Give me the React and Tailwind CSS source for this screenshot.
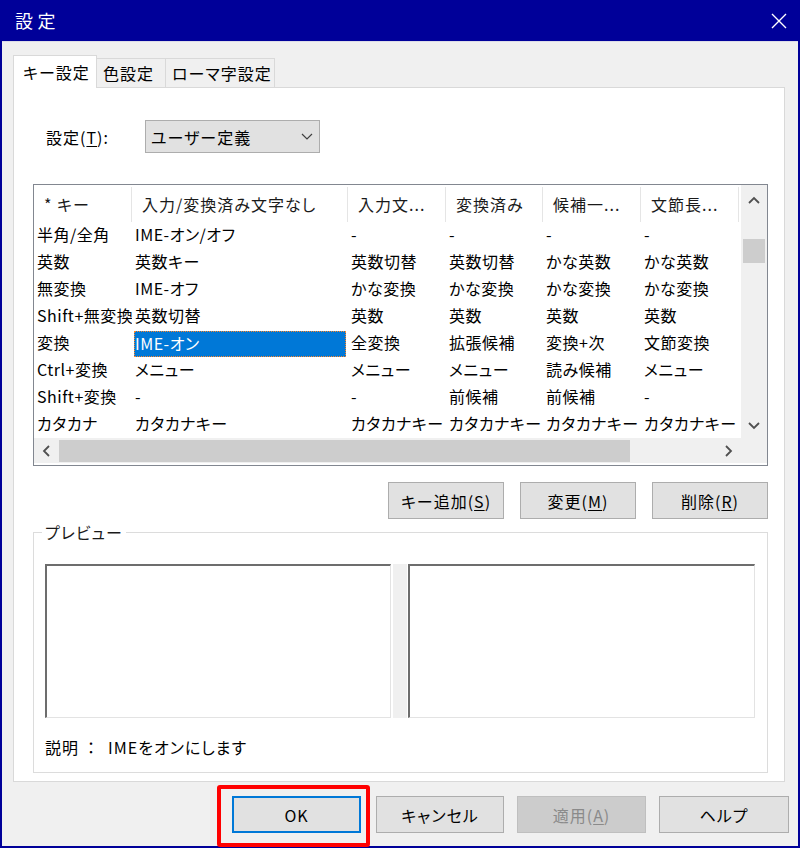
import React from "react";

const cols = [98, 216, 98, 97, 98, 98];
const headers = ["* キー", "入力/変換済み文字なし", "入力文...", "変換済み", "候補一...", "文節長..."];
const rows = [
  ["半角/全角", "IME-オン/オフ", "-", "-", "-", "-"],
  ["英数", "英数キー", "英数切替", "英数切替", "かな英数", "かな英数"],
  ["無変換", "IME-オフ", "かな変換", "かな変換", "かな変換", "かな変換"],
  ["Shift+無変換", "英数切替", "英数", "英数", "英数", "英数"],
  ["変換", "IME-オン", "全変換", "拡張候補", "変換+次", "文節変換"],
  ["Ctrl+変換", "メニュー", "メニュー", "メニュー", "読み候補", "メニュー"],
  ["Shift+変換", "-", "-", "前候補", "前候補", "-"],
  ["カタカナ", "カタカナキー", "カタカナキー", "カタカナキー", "カタカナキー", "カタカナキー"],
];

function Chevron({ dir, className }) {
  const pts = {
    up: "1,7 6,2 11,7",
    down: "1,2 6,7 11,2",
    left: "7,1 2,6 7,11",
    right: "2,1 7,6 2,11",
  }[dir];
  const vb = dir === "up" || dir === "down" ? "0 0 12 9" : "0 0 9 12";
  return (
    <svg viewBox={vb} className={className} fill="none">
      <polyline points={pts} stroke="#505050" strokeWidth="1.8" />
    </svg>
  );
}

function Btn({ children, className = "" }) {
  return (
    <div className={"flex items-center justify-center bg-[#e1e1e1] border border-[#adadad] " + className}>
      {children}
    </div>
  );
}

export default function App() {
  return (
    <div className="relative w-[800px] h-[848px] bg-[#000099] flex flex-col font-['Noto_Sans_CJK_JP',sans-serif] [font-feature-settings:'palt'] text-[16px] tracking-[1px] text-black overflow-hidden">
      {/* Title bar */}
      <div className="h-[41px] shrink-0 flex items-center justify-between pl-[15px] pr-[13px] text-white">
        <span className="text-[18px] tracking-[4.5px] leading-none pb-[1px]">設定</span>
        <svg viewBox="0 0 16 16" className="w-[16px] h-[16px]" fill="none">
          <path d="M1 1 L15 15 M15 1 L1 15" stroke="#ffffff" strokeWidth="1.4" />
        </svg>
      </div>

      {/* Body */}
      <div className="flex-1 mx-[2px] mb-[2px] bg-[#f0f0f0] border-t border-[#dcdce8] flex flex-col pl-[11px] pt-[13px]">
        {/* Tabs */}
        <div className="flex items-end h-[33px] relative z-10">
          <div className="w-[84px] h-[33px] bg-white border-t border-l border-r border-[#d9d9d9] flex items-center pl-[9px] leading-none">
            キー設定
          </div>
          <div className="w-[69px] h-[29px] mb-px bg-[#f0f0f0] border-t border-r border-[#d9d9d9] flex items-center pl-[6px] leading-none">
            色設定
          </div>
          <div className="w-[109px] h-[29px] mb-px bg-[#f0f0f0] border-t border-r border-[#d9d9d9] flex items-center pl-[6px] leading-none">
            ローマ字設定
          </div>
        </div>

        {/* Panel */}
        <div className="-mt-px w-[772px] h-[695px] bg-white border border-[#d9d9d9] flex flex-col">
          {/* Setting row */}
          <div className="mt-[32px] h-[33px] flex items-center pl-[32px]">
            <span className="w-[99px]">
              設定(<span className="underline underline-offset-2">T</span>):
            </span>
            <div className="w-[175px] h-[33px] bg-[#e1e1e1] border border-[#adadad] flex items-center justify-between pl-[5px] pr-[6px]">
              <span>ユーザー定義</span>
              <svg viewBox="0 0 12 7" className="w-[12px] h-[7px]" fill="none">
                <polyline points="1,1 6,6 11,1" stroke="#404040" strokeWidth="1.2" />
              </svg>
            </div>
          </div>

          {/* List view */}
          <div className="mt-[31px] ml-[19px] w-[735px] h-[282px] border border-[#828790] bg-white flex flex-col">
            <div className="flex h-[253px]">
              <div className="w-[707px] flex flex-col overflow-hidden">
                {/* Header */}
                <div className="flex h-[37px] shrink-0">
                  {headers.map((h, i) => (
                    <div
                      key={i}
                      style={{ width: cols[i] }}
                      className="shrink-0 h-full flex items-center pl-[10px] whitespace-nowrap overflow-hidden relative"
                    >
                      <span className="text-[#1a1a1a]">{h}</span>
                      <div className="absolute right-0 top-[2px] bottom-0 w-px bg-[#e5e5e5]" />
                    </div>
                  ))}
                </div>
                {/* Rows */}
                {rows.map((r, ri) => (
                  <div key={ri} className="flex h-[27px] shrink-0 tracking-[0.5px]">
                    {r.map((c, ci) => {
                      const sel = ri === 4 && ci === 1;
                      return (
                        <div
                          key={ci}
                          style={{ width: cols[ci] }}
                          className="shrink-0 h-full whitespace-nowrap overflow-hidden px-[2px] pt-[1px]"
                        >
                          {sel ? (
                            <div className="h-full w-full bg-[#0078d7] border border-dotted border-[#ff8728] text-white leading-[23px]">
                              {c}
                            </div>
                          ) : (
                            <div className="h-full pl-[1px] leading-[23px]">{c}</div>
                          )}
                        </div>
                      );
                    })}
                  </div>
                ))}
              </div>
              {/* Vertical scrollbar */}
              <div className="w-[26px] bg-[#f0f0f0] flex flex-col items-center">
                <div className="h-[30px] w-full flex items-center justify-center">
                  <Chevron dir="up" className="w-[12px] h-[9px]" />
                </div>
                <div className="h-[24px]" />
                <div className="h-[24px] w-[22px] bg-[#cdcdcd]" />
                <div className="flex-1" />
                <div className="h-[26px] w-full flex items-center justify-center">
                  <Chevron dir="down" className="w-[12px] h-[9px]" />
                </div>
              </div>
            </div>
            {/* Horizontal scrollbar */}
            <div className="flex h-[25px]">
              <div className="w-[707px] bg-[#f0f0f0] flex items-center">
                <div className="w-[25px] h-full flex items-center justify-center">
                  <Chevron dir="left" className="w-[9px] h-[12px]" />
                </div>
                <div className="w-[571px] h-[22px] bg-[#cdcdcd]" />
                <div className="flex-1" />
                <div className="w-[26px] h-full flex items-center justify-center">
                  <Chevron dir="right" className="w-[9px] h-[12px]" />
                </div>
              </div>
              <div className="w-[26px] bg-[#f0f0f0]" />
            </div>
          </div>

          {/* Action buttons */}
          <div className="mt-[16px] h-[37px] flex justify-end pr-[16px] gap-[16px]">
            <Btn className="w-[116px] h-[37px]">
              <span>
                キー追加(<span className="underline underline-offset-2">S</span>)
              </span>
            </Btn>
            <Btn className="w-[116px] h-[37px]">
              <span>
                変更(<span className="underline underline-offset-2">M</span>)
              </span>
            </Btn>
            <Btn className="w-[116px] h-[37px]">
              <span>
                削除(<span className="underline underline-offset-2">R</span>)
              </span>
            </Btn>
          </div>

          {/* Preview group */}
          <div className="relative mt-[13px] ml-[19px] w-[735px] h-[241px] border border-[#dcdcdc] flex flex-col pt-[31px] pl-[11px]">
            <span className="absolute left-[8px] top-[-12px] bg-white px-[3px] leading-[22px] text-[#1a1a1a]">
              プレビュー
            </span>
            <div className="flex h-[154px]">
              <div className="w-[346px] h-full bg-white border-t-2 border-l-2 border-r border-b border-t-[#6d6d6d] border-l-[#6d6d6d] border-r-[#e3e3e3] border-b-[#e3e3e3]" />
              <div className="ml-[2px] w-[14px] h-full bg-[#f0f0f0]" />
              <div className="ml-[1px] w-[347px] h-full bg-white border-t-2 border-l-2 border-r border-b border-t-[#6d6d6d] border-l-[#6d6d6d] border-r-[#e3e3e3] border-b-[#e3e3e3]" />
            </div>
            <div className="mt-[18px] h-[22px] leading-[22px] flex">
              <span>説明</span>
              <span className="ml-[8px]">：</span>
              <span className="ml-[12px]">IMEをオンにします</span>
            </div>
          </div>
        </div>

        {/* Bottom buttons */}
        <div className="mt-[14px] ml-[219px] flex h-[37px]">
          <div className="w-[129px] h-[37px] flex items-center justify-center bg-[#e1e1e1] border-2 border-[#0078d7]">
            OK
          </div>
          <Btn className="ml-[15px] w-[128px] h-[37px]">キャンセル</Btn>
          <div className="ml-[13px] w-[129px] h-[37px] flex items-center justify-center bg-[#cccccc] border border-[#bfbfbf] text-[#8a8a8a]">
            <span>
              適用(<span className="underline underline-offset-2">A</span>)
            </span>
          </div>
          <Btn className="ml-[13px] w-[130px] h-[37px]">ヘルプ</Btn>
        </div>
      </div>

      {/* Red annotation box */}
      <div className="absolute left-[217px] top-[785px] w-[153px] h-[62px] border-[4px] border-[#ff0000] rounded-[3px] pointer-events-none" />
    </div>
  );
}
